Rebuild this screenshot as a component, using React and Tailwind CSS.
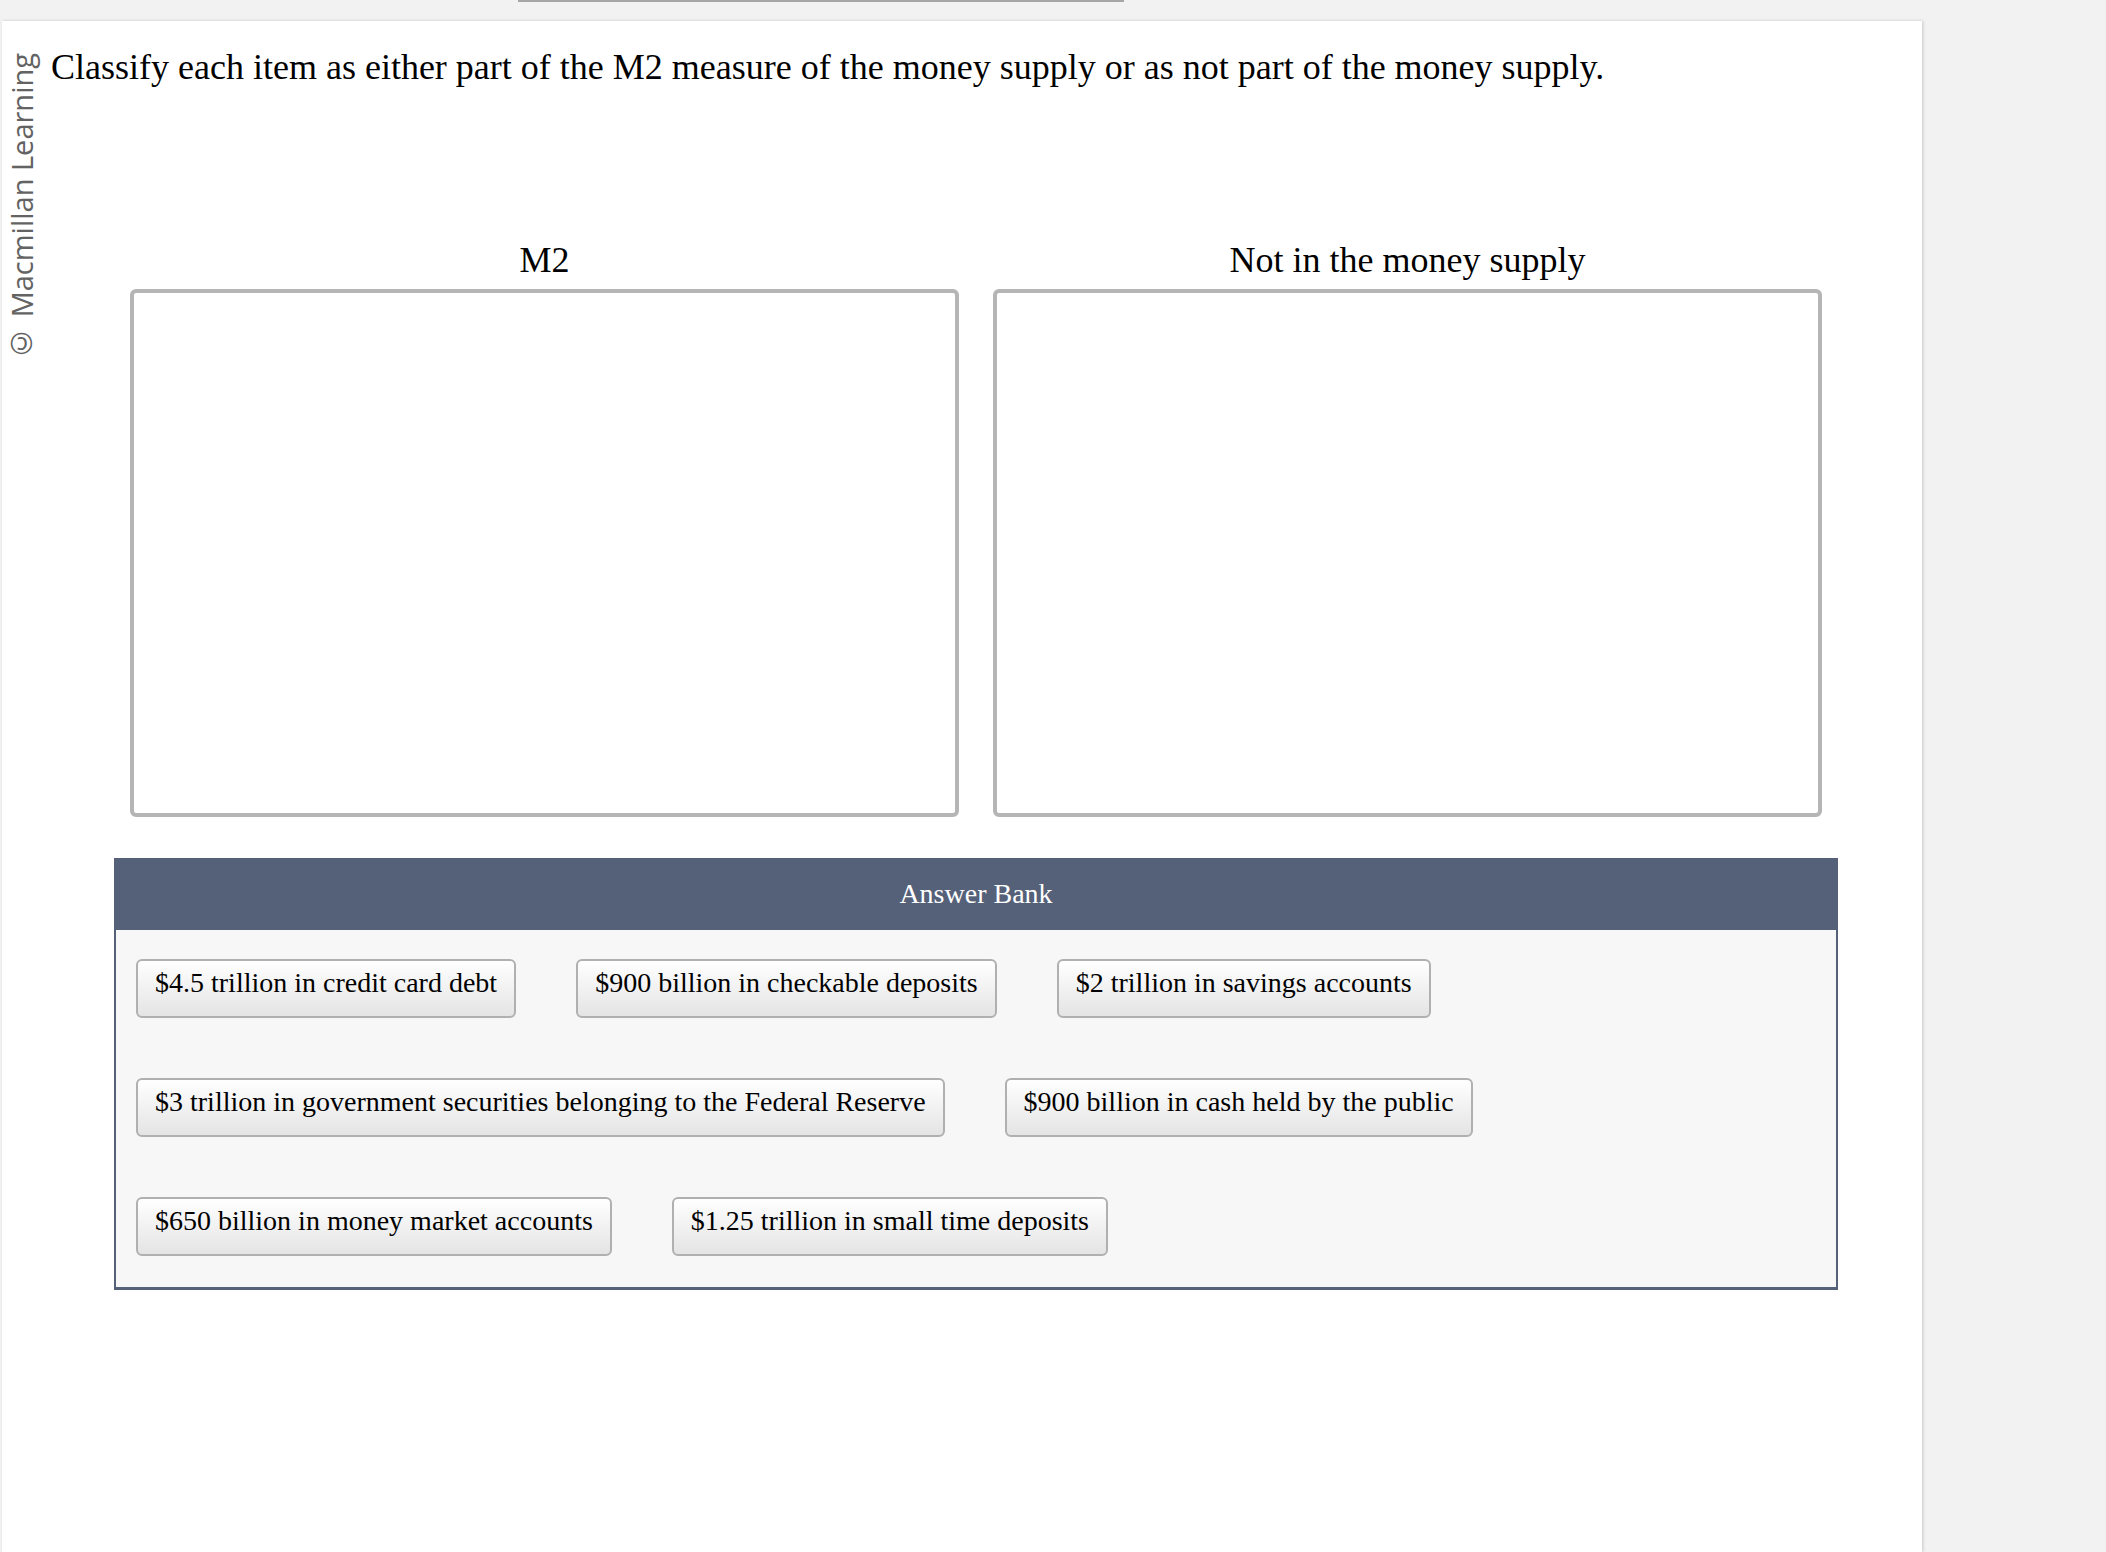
import React from 'react';

const answers = [
  '$4.5 trillion in credit card debt',
  '$900 billion in checkable deposits',
  '$2 trillion in savings accounts',
  '$3 trillion in government securities belonging to the Federal Reserve',
  '$900 billion in cash held by the public',
  '$650 billion in money market accounts',
  '$1.25 trillion in small time deposits',
];

// One drop zone with its heading
const DropZone = ({ label }) => (
  <div className="flex flex-col w-[829px]">
    <div className="h-[41px] leading-[41px] text-center text-[36px] text-black">{label}</div>
    <div className="mt-[8px] h-[528px] bg-white border-[4px] border-[#b5b5b5] rounded-[6px]"></div>
  </div>
);

const AnswerChip = ({ text }) => (
  <div className="h-[59px] px-[17px] pt-[6px] border-2 border-[#b0b0b0] rounded-[6px] bg-linear-to-b from-[#ffffff] to-[#e4e4e4] text-[28px] leading-[32px] text-black whitespace-nowrap cursor-pointer">
    {text}
  </div>
);

export default function App() {
  return (
    <div className="h-[1552px] overflow-hidden bg-[#f2f2f2]" style={{ fontFamily: '"Liberation Serif", "Times New Roman", serif' }}>
      {/* top scroll bar */}
      <div className="ml-[518px] w-[606px] h-[2px] bg-[#a6a6a6]"></div>

      {/* page panel */}
      <div className="mt-[19px] ml-[2px] w-[1920px] h-[1531px] bg-white shadow-[1px_0_3px_rgba(0,0,0,0.18)] flex">
        {/* copyright strip */}
        <div className="w-[49px] shrink-0 pl-[4px] pt-[32px]">
          <div
            className="[writing-mode:vertical-rl] rotate-180 text-[29px] leading-[32px] text-[#636363] whitespace-nowrap"
            style={{ fontFamily: '"Open Sans", "Noto Sans", sans-serif' }}
          >
            © Macmillan Learning
          </div>
        </div>

        <div className="flex-1 flex flex-col">
          <h1 className="mt-[26px] text-[36px] leading-[41px] text-black font-normal">
            Classify each item as either part of the M2 measure of the money supply or as not part of the money supply.
          </h1>

          <div className="ml-[63px] w-[1724px] flex flex-col">
            {/* drop zones */}
            <div className="mt-[152px] px-[16px] flex justify-between">
              <DropZone label="M2" />
              <DropZone label="Not in the money supply" />
            </div>

            {/* answer bank */}
            <div className="mt-[41px]">
              <div className="h-[72px] bg-[#546179] flex items-center justify-center text-white text-[28px]">
                Answer Bank
              </div>
              <div className="bg-[#f7f7f7] border-x-2 border-b-[3px] border-[#546179] pt-[29px] pb-[31px] pl-[20px] pr-[20px] flex flex-wrap gap-x-[60px] gap-y-[60px]">
                {answers.map((a, i) => (
                  <AnswerChip key={i} text={a} />
                ))}
              </div>
            </div>
          </div>
        </div>
      </div>
    </div>
  );
}
